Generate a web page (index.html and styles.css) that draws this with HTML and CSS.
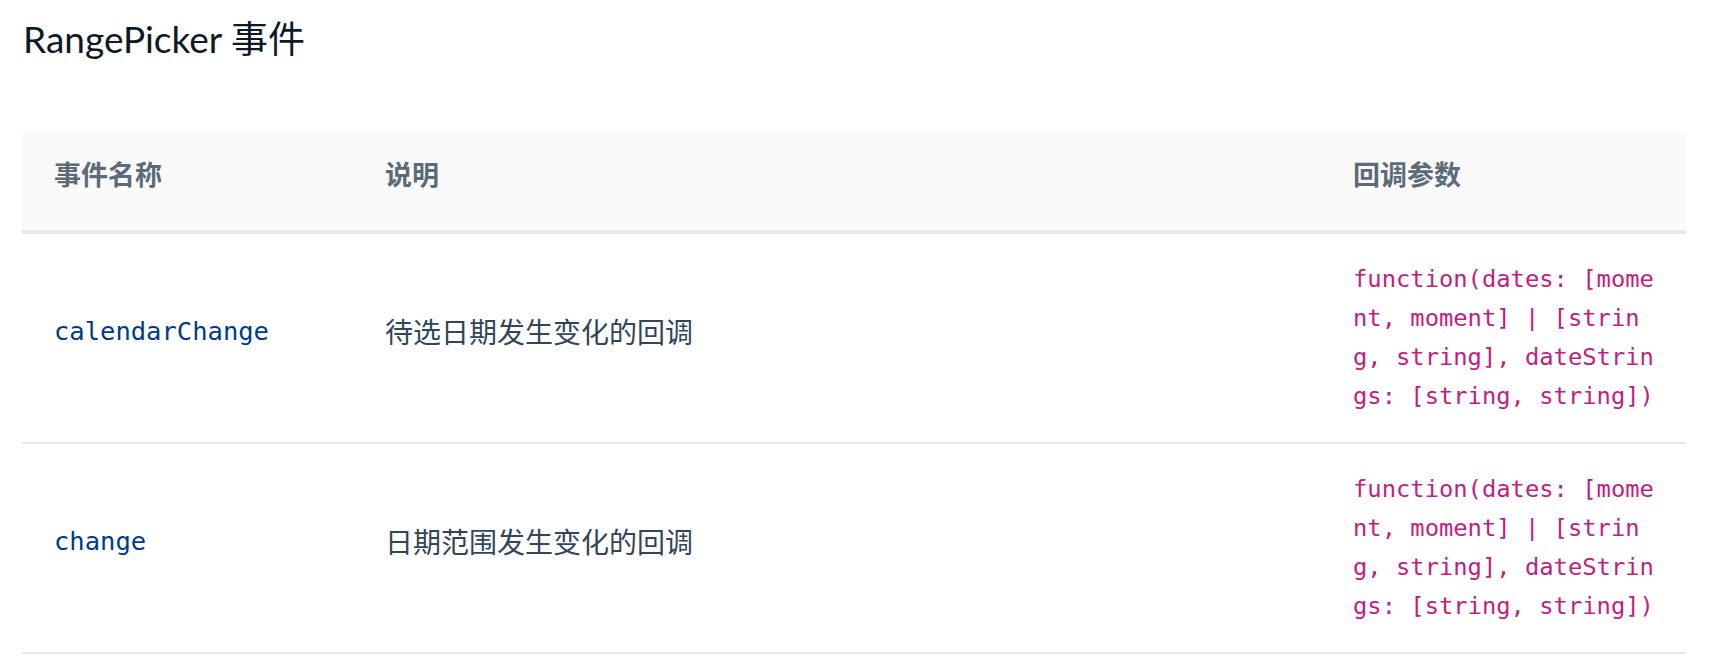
FILE: index.html
```html
<!DOCTYPE html>
<html lang="zh">
<head>
    <meta charset="UTF-8">
    <title>RangePicker 事件</title>
    <link rel="stylesheet" href="styles.css">
</head>
<body>

<div class="page">
    <h2 class="title">RangePicker 事件</h2>

    <table class="api">
        <colgroup>
            <col class="col-name">
            <col class="col-desc">
            <col class="col-args">
        </colgroup>
        <thead>
            <tr>
                <th>事件名称</th>
                <th>说明</th>
                <th>回调参数</th>
            </tr>
        </thead>
        <tbody>
            <tr>
                <td class="name">calendarChange</td>
                <td class="desc">待选日期发生变化的回调</td>
                <td class="args">function(dates: [moment, moment] | [string, string], dateStrings: [string, string])</td>
            </tr>
            <tr>
                <td class="name">change</td>
                <td class="desc">日期范围发生变化的回调</td>
                <td class="args">function(dates: [moment, moment] | [string, string], dateStrings: [string, string])</td>
            </tr>
        </tbody>
    </table>
</div>

</body>
</html>
```

FILE: styles.css
```css
body { margin: 0; background: #fff; font-family: Lato, "Noto Sans CJK SC", sans-serif; }
.page { padding: 0 24px 0 22px; }
.title { margin: 0; padding: 17px 0 0 1px; font-size: 37px; font-weight: 400; line-height: 44px; color: #0d1a26; height: 132px; box-sizing: border-box; }

.api { width: 1664px; table-layout: fixed; border-collapse: collapse; border-spacing: 0; }
.col-name { width: 331px; }
.col-desc { width: 968px; }
.col-args { width: 365px; }

.api th { background: #fafafa; color: #5c6b77; font-family: "Noto Sans CJK SC", sans-serif; font-size: 27px; font-weight: 700; text-align: left; height: 100px; padding: 0 32px 14px; box-sizing: border-box; border-bottom: 4px solid #e8e8e8; line-height: 40px; }
.api td { padding: 19px 32px 33px; border-bottom: 2px solid #e8e8e8; vertical-align: middle; line-height: 39px; }

.name { color: #003a8c; font-family: "DejaVu Sans Mono", monospace; font-size: 25.5px; }
.desc { color: #314659; font-family: "Noto Sans CJK SC", sans-serif; font-size: 28px; }
.api td.args { color: #c41d7f; font-family: "DejaVu Sans Mono", monospace; font-size: 23.8px; word-break: break-all; padding: 26px 24px 26px 32px; }
```
